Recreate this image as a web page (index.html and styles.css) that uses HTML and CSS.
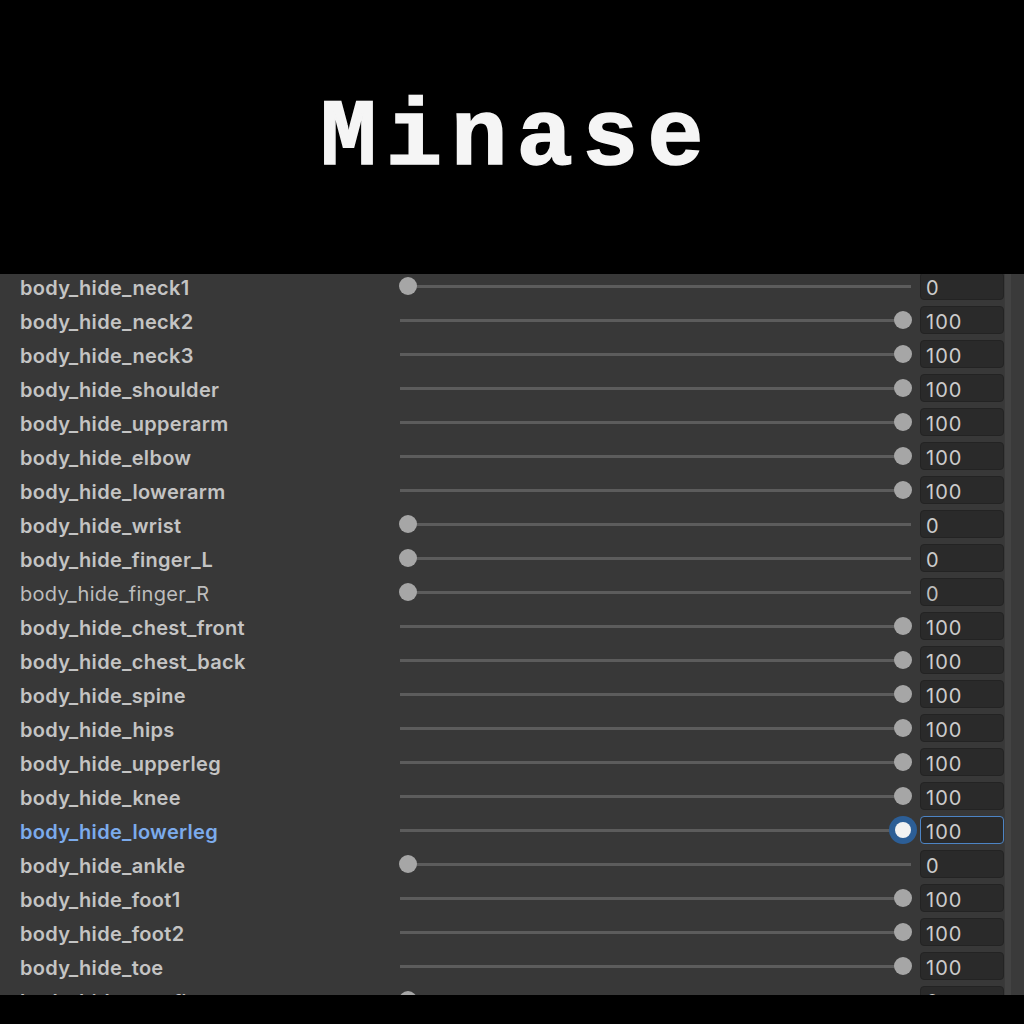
FILE: index.html
```html
<!DOCTYPE html>
<html>
<head>
<meta charset="utf-8">
<link rel="stylesheet" href="styles.css">
</head>
<body>
<header class="banner"><h1 class="title">Minase</h1></header>
<section class="panel">
  <div class="list">
    <div class="row"><span class="label">body_hide_neck1</span><div class="slider min"><span class="thumb"></span></div><div class="field">0</div></div>
    <div class="row"><span class="label">body_hide_neck2</span><div class="slider max"><span class="thumb"></span></div><div class="field">100</div></div>
    <div class="row"><span class="label">body_hide_neck3</span><div class="slider max"><span class="thumb"></span></div><div class="field">100</div></div>
    <div class="row"><span class="label">body_hide_shoulder</span><div class="slider max"><span class="thumb"></span></div><div class="field">100</div></div>
    <div class="row"><span class="label">body_hide_upperarm</span><div class="slider max"><span class="thumb"></span></div><div class="field">100</div></div>
    <div class="row"><span class="label">body_hide_elbow</span><div class="slider max"><span class="thumb"></span></div><div class="field">100</div></div>
    <div class="row"><span class="label">body_hide_lowerarm</span><div class="slider max"><span class="thumb"></span></div><div class="field">100</div></div>
    <div class="row"><span class="label">body_hide_wrist</span><div class="slider min"><span class="thumb"></span></div><div class="field">0</div></div>
    <div class="row"><span class="label">body_hide_finger_L</span><div class="slider min"><span class="thumb"></span></div><div class="field">0</div></div>
    <div class="row"><span class="label plain">body_hide_finger_R</span><div class="slider min"><span class="thumb"></span></div><div class="field plain">0</div></div>
    <div class="row"><span class="label">body_hide_chest_front</span><div class="slider max"><span class="thumb"></span></div><div class="field">100</div></div>
    <div class="row"><span class="label">body_hide_chest_back</span><div class="slider max"><span class="thumb"></span></div><div class="field">100</div></div>
    <div class="row"><span class="label">body_hide_spine</span><div class="slider max"><span class="thumb"></span></div><div class="field">100</div></div>
    <div class="row"><span class="label">body_hide_hips</span><div class="slider max"><span class="thumb"></span></div><div class="field">100</div></div>
    <div class="row"><span class="label">body_hide_upperleg</span><div class="slider max"><span class="thumb"></span></div><div class="field">100</div></div>
    <div class="row"><span class="label">body_hide_knee</span><div class="slider max"><span class="thumb"></span></div><div class="field">100</div></div>
    <div class="row focused"><span class="label">body_hide_lowerleg</span><div class="slider max"><span class="thumb"></span></div><div class="field">100</div></div>
    <div class="row"><span class="label">body_hide_ankle</span><div class="slider min"><span class="thumb"></span></div><div class="field">0</div></div>
    <div class="row"><span class="label">body_hide_foot1</span><div class="slider max"><span class="thumb"></span></div><div class="field">100</div></div>
    <div class="row"><span class="label">body_hide_foot2</span><div class="slider max"><span class="thumb"></span></div><div class="field">100</div></div>
    <div class="row"><span class="label">body_hide_toe</span><div class="slider max"><span class="thumb"></span></div><div class="field">100</div></div>
    <div class="row"><span class="label">body_hide_toe_finger</span><div class="slider min"><span class="thumb"></span></div><div class="field">0</div></div>
  </div>
  <div class="scrollbar"><div class="scroll-track"></div></div>
</section>
</body>
</html>
```
FILE: styles.css
```css
html, body {
  margin: 0;
  padding: 0;
  background: #000;
}
body {
  width: 1024px;
  height: 1024px;
  overflow: hidden;
  font-family: Inter, "Noto Sans", sans-serif;
}
.banner {
  height: 274px;
  box-sizing: border-box;
  padding-top: 92px;
  background: #000;
}
.title {
  margin: 0;
  text-align: center;
  font-family: "Liberation Mono", "Courier New", monospace;
  font-weight: 700;
  font-size: 94px;
  line-height: 94px;
  letter-spacing: 9px;
  padding-left: 9px;
  color: #f5f5f5;
  -webkit-text-stroke: 1.5px #f5f5f5;
}
.panel {
  height: 721px;
  background: #383838;
  display: flex;
  overflow: hidden;
}
.list {
  flex: 1;
  margin-top: -5px;
  display: flex;
  flex-direction: column;
}
.row {
  height: 34px;
  flex: 0 0 34px;
  display: flex;
  align-items: center;
}
.label {
  width: 399px;
  box-sizing: border-box;
  padding-left: 20px;
  padding-top: 3px;
  font-size: 20px;
  letter-spacing: 0.3px;
  font-weight: 600;
  color: #c4c4c4;
  white-space: nowrap;
}
.label.plain {
  font-weight: 400;
  color: #bdbdbd;
}
.slider {
  flex: 1;
  height: 28px;
  display: flex;
  align-items: center;
  margin-right: 8px;
  background: linear-gradient(#5c5c5c, #5c5c5c) no-repeat 1px 50% / calc(100% - 2px) 3px;
}
.slider.min { justify-content: flex-start; }
.slider.max { justify-content: flex-end; }
.thumb {
  width: 18px;
  height: 18px;
  border-radius: 50%;
  background: #a6a6a6;
}
.field {
  width: 84px;
  height: 28px;
  box-sizing: border-box;
  border: 1px solid #232323;
  border-radius: 4px;
  background: #2a2a2a;
  color: #cccccc;
  font-size: 20px;
  letter-spacing: 1px;
  padding-left: 5px;
  padding-top: 2px;
  line-height: 26px;
}
.field.plain { color: #bdbdbd; }
.focused .label { color: #7cabec; }
.focused .thumb {
  background: #f2f2f2;
  width: 16px;
  height: 16px;
  margin-right: 1px;
  box-shadow: 0 0 0 6px #2c5e96;
}
.focused .field {
  border: 1.5px solid #4d84c4;
}
.scrollbar {
  width: 20px;
  background: #3a3a3a;
  display: flex;
}
.scroll-track {
  width: 6px;
  margin-left: 1px;
  background: #434343;
}
```
